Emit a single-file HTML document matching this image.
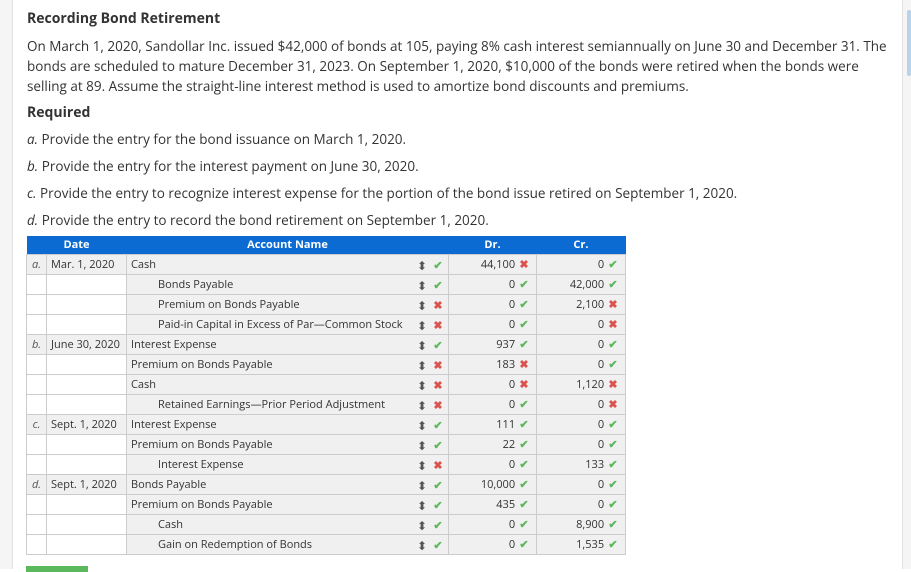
<!DOCTYPE html>
<html><head><meta charset="utf-8"><style>
*{margin:0;padding:0;box-sizing:border-box}
body{width:911px;height:569px;overflow:hidden;background:#fff;font-family:"Open Sans","Liberation Sans",sans-serif;color:#333;position:relative}
.lstrip{position:absolute;left:0;top:0;width:13px;height:569px;background:#f5f5f5;border-right:1px solid #e2e2e2}
.rstrip{position:absolute;left:902px;top:0;width:9px;height:569px;background:#f5f5f5;border-left:1px solid #e2e2e2}
.sb{position:absolute;left:907px;top:10px;width:4px;height:66px;background:#b9d3ea;border-radius:2px}
h1{position:absolute;left:27px;top:9px;font-size:14px;font-weight:bold;color:#333}
.p{position:absolute;left:27px;top:36px;width:863px;font-size:13.5px;line-height:20px}
.req{position:absolute;left:27px;top:103px;font-size:14px;font-weight:bold}
.q{position:absolute;left:27px;font-size:13.5px}
.q i{font-style:italic}
table{position:absolute;left:26px;top:236px;border-collapse:collapse;font-size:11px;width:599px;table-layout:fixed}
th{background:#0b6bd2;color:#fff;font-weight:bold;height:18px;font-size:11px;text-align:center}
td{height:20px;border:1px solid #ccc;background:#f0f0f0;white-space:nowrap;padding:0 4px;position:relative;color:#333}
td.e{background:#fff}
td.l{font-style:italic;color:#555;text-align:center;padding:0}
.in{padding-left:31px}
.ar{position:absolute;left:290px;top:2px;font-size:12px;color:#555}
.m{display:inline-block;width:12px;text-align:center;font-weight:bold}
.ok{color:#5cb85c}.no{color:#d9534f}
td.n{text-align:right;padding-right:6px}
td.acc .m{position:absolute;left:305px;top:3px}
.btn{position:absolute;left:26px;top:566px;width:62px;height:6px;background:#5cb85c}
</style></head><body>
<div class="lstrip"></div><div class="rstrip"></div><div class="sb"></div>
<h1>Recording Bond Retirement</h1>
<div class="p">On March 1, 2020, Sandollar Inc. issued $42,000 of bonds at 105, paying 8% cash interest semiannually on June 30 and December 31. The bonds are scheduled to mature December 31, 2023. On September 1, 2020, $10,000 of the bonds were retired when the bonds were selling at 89. Assume the straight-line interest method is used to amortize bond discounts and premiums.</div>
<div class="req">Required</div>
<div class="q" style="top:130px"><i>a.</i> Provide the entry for the bond issuance on March 1, 2020.</div>
<div class="q" style="top:157px"><i>b.</i> Provide the entry for the interest payment on June 30, 2020.</div>
<div class="q" style="top:184px"><i>c.</i> Provide the entry to recognize interest expense for the portion of the bond issue retired on September 1, 2020.</div>
<div class="q" style="top:211px"><i>d.</i> Provide the entry to record the bond retirement on September 1, 2020.</div>
<table>
<colgroup><col style="width:20px"><col style="width:80px"><col style="width:322px"><col style="width:88px"><col style="width:89px"></colgroup>
<tr><th colspan="2">Date</th><th>Account Name</th><th>Dr.</th><th>Cr.</th></tr>
<tr><td class="l">a.</td><td>Mar. 1, 2020</td><td class="acc">Cash<span class="ar">⬍</span><span class="m ok">✔</span></td><td class="n">44,100 <span class="m no">✖</span></td><td class="n">0 <span class="m ok">✔</span></td></tr>
<tr><td class="e"></td><td class="e"></td><td class="acc in">Bonds Payable<span class="ar">⬍</span><span class="m ok">✔</span></td><td class="n">0 <span class="m ok">✔</span></td><td class="n">42,000 <span class="m ok">✔</span></td></tr>
<tr><td class="e"></td><td class="e"></td><td class="acc in">Premium on Bonds Payable<span class="ar">⬍</span><span class="m no">✖</span></td><td class="n">0 <span class="m ok">✔</span></td><td class="n">2,100 <span class="m no">✖</span></td></tr>
<tr><td class="e"></td><td class="e"></td><td class="acc in">Paid-in Capital in Excess of Par—Common Stock<span class="ar">⬍</span><span class="m no">✖</span></td><td class="n">0 <span class="m ok">✔</span></td><td class="n">0 <span class="m no">✖</span></td></tr>
<tr><td class="l">b.</td><td>June 30, 2020</td><td class="acc">Interest Expense<span class="ar">⬍</span><span class="m ok">✔</span></td><td class="n">937 <span class="m ok">✔</span></td><td class="n">0 <span class="m ok">✔</span></td></tr>
<tr><td class="e"></td><td class="e"></td><td class="acc">Premium on Bonds Payable<span class="ar">⬍</span><span class="m no">✖</span></td><td class="n">183 <span class="m no">✖</span></td><td class="n">0 <span class="m ok">✔</span></td></tr>
<tr><td class="e"></td><td class="e"></td><td class="acc">Cash<span class="ar">⬍</span><span class="m no">✖</span></td><td class="n">0 <span class="m no">✖</span></td><td class="n">1,120 <span class="m no">✖</span></td></tr>
<tr><td class="e"></td><td class="e"></td><td class="acc in">Retained Earnings—Prior Period Adjustment<span class="ar">⬍</span><span class="m no">✖</span></td><td class="n">0 <span class="m ok">✔</span></td><td class="n">0 <span class="m no">✖</span></td></tr>
<tr><td class="l">c.</td><td>Sept. 1, 2020</td><td class="acc">Interest Expense<span class="ar">⬍</span><span class="m ok">✔</span></td><td class="n">111 <span class="m ok">✔</span></td><td class="n">0 <span class="m ok">✔</span></td></tr>
<tr><td class="e"></td><td class="e"></td><td class="acc">Premium on Bonds Payable<span class="ar">⬍</span><span class="m ok">✔</span></td><td class="n">22 <span class="m ok">✔</span></td><td class="n">0 <span class="m ok">✔</span></td></tr>
<tr><td class="e"></td><td class="e"></td><td class="acc in">Interest Expense<span class="ar">⬍</span><span class="m no">✖</span></td><td class="n">0 <span class="m ok">✔</span></td><td class="n">133 <span class="m ok">✔</span></td></tr>
<tr><td class="l">d.</td><td>Sept. 1, 2020</td><td class="acc">Bonds Payable<span class="ar">⬍</span><span class="m ok">✔</span></td><td class="n">10,000 <span class="m ok">✔</span></td><td class="n">0 <span class="m ok">✔</span></td></tr>
<tr><td class="e"></td><td class="e"></td><td class="acc">Premium on Bonds Payable<span class="ar">⬍</span><span class="m ok">✔</span></td><td class="n">435 <span class="m ok">✔</span></td><td class="n">0 <span class="m ok">✔</span></td></tr>
<tr><td class="e"></td><td class="e"></td><td class="acc in">Cash<span class="ar">⬍</span><span class="m ok">✔</span></td><td class="n">0 <span class="m ok">✔</span></td><td class="n">8,900 <span class="m ok">✔</span></td></tr>
<tr><td class="e"></td><td class="e"></td><td class="acc in">Gain on Redemption of Bonds<span class="ar">⬍</span><span class="m ok">✔</span></td><td class="n">0 <span class="m ok">✔</span></td><td class="n">1,535 <span class="m ok">✔</span></td></tr>
</table>
<div class="btn"></div>
</body></html>
